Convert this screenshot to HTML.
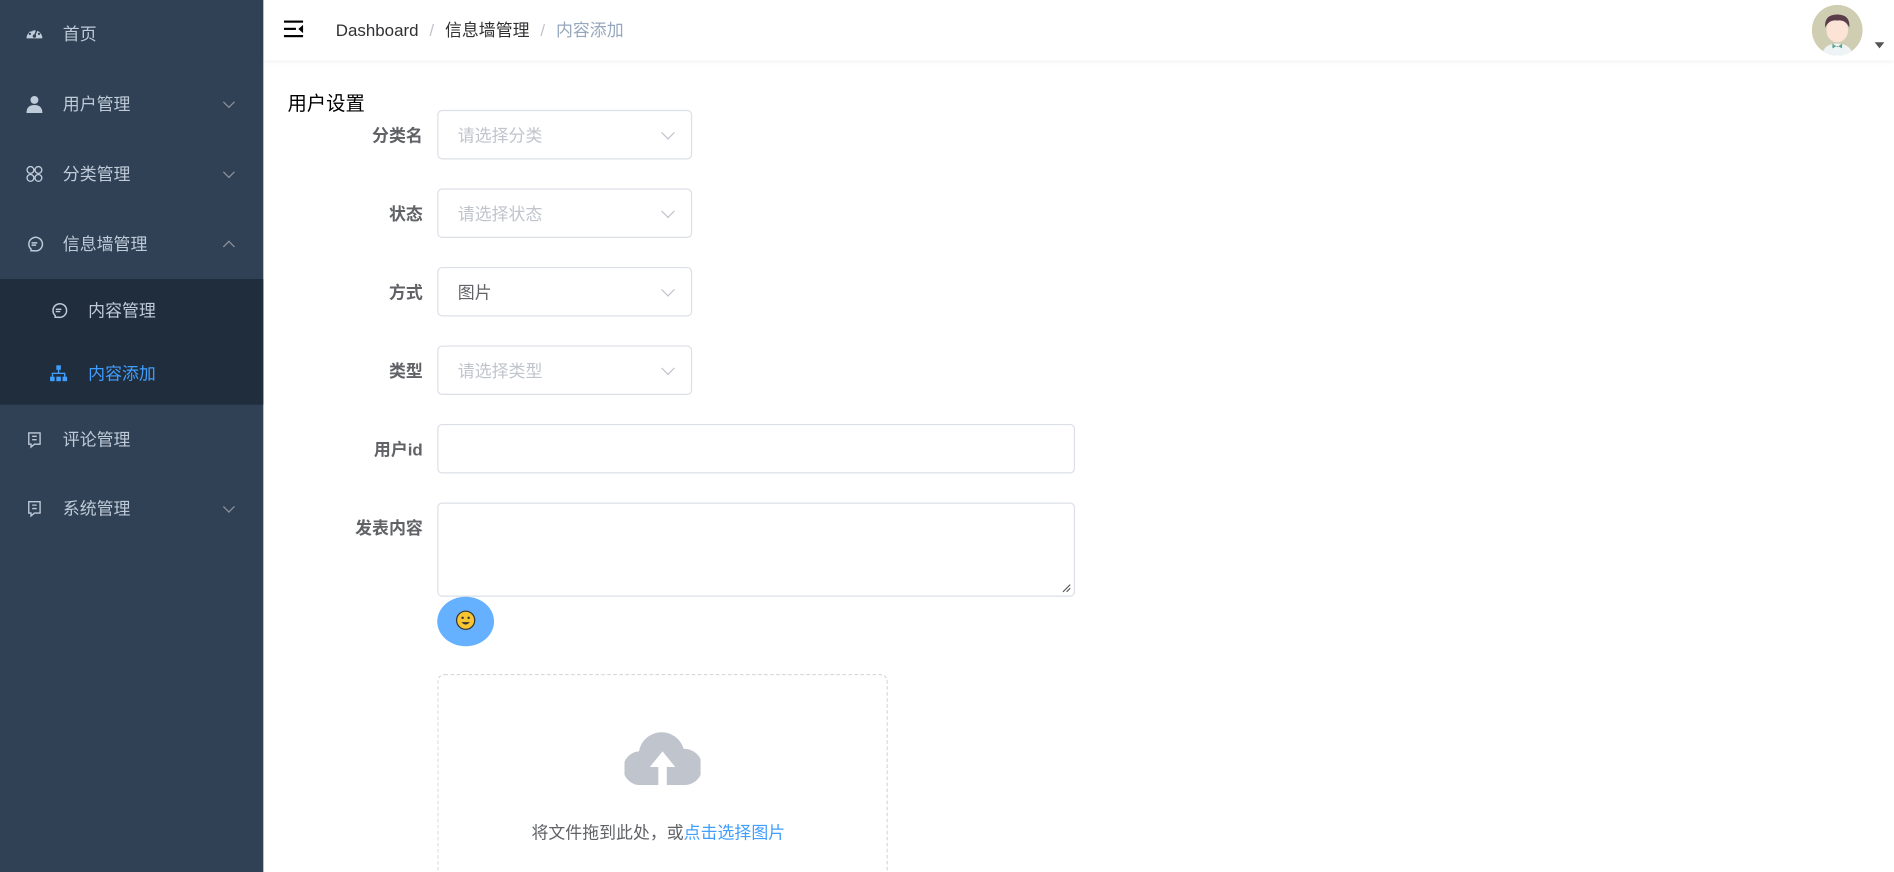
<!DOCTYPE html>
<html><head><meta charset="utf-8"><style>
html,body{margin:0;padding:0;width:1894px;height:872px;overflow:hidden;background:#fff;}
#w{position:absolute;left:0;top:0;width:1568px;height:722px;overflow:hidden;transform:scale(1.20791);transform-origin:0 0;font-family:"Liberation Sans","Noto Sans CJK SC",sans-serif;}
.side{position:absolute;left:0;top:0;width:218px;height:722px;background:#304156;}
.mi{position:absolute;left:0;width:218px;height:56px;color:#bfcbd9;font-size:14px;}
.mi .t{position:absolute;left:52px;top:50%;transform:translateY(-50%);}
.mi .ic{position:absolute;left:21px;top:50%;transform:translateY(-50%);width:15px;height:15px;}
.mi .ar{position:absolute;left:186px;top:50%;width:6px;height:6px;border-right:1px solid #909399;border-bottom:1px solid #909399;transform:translateY(-70%) rotate(45deg);}
.mi .ar.up{transform:translateY(-20%) rotate(-135deg);}
.sub{position:absolute;left:0;top:231px;width:218px;height:104px;background:#1f2d3d;}
.abs{position:absolute;}
.hdr{position:absolute;left:218px;top:0;right:0;height:50px;box-shadow:0 1px 4px rgba(0,21,41,.08);}
.lbl{position:absolute;right:1218px;font-size:14px;font-weight:bold;color:#606266;}
.sel{position:absolute;left:362px;width:209px;height:39px;border:1px solid #dcdfe6;border-radius:4px;font-size:14px;color:#c0c4cc;}
.sel span{position:absolute;left:16px;top:10px;}
.sel i{position:absolute;right:15px;top:14px;width:7px;height:7px;border-right:1px solid #c0c4cc;border-bottom:1px solid #c0c4cc;transform:rotate(45deg);}
</style></head><body><div id="w">
<div class="side">
 <div class="mi" style="top:0"><svg class="ic" viewBox="0 0 16 16"><path d="M1 12 A7 7 0 1 1 15 12 Z" fill="#bfcbd9"/><circle cx="8" cy="10" r="1.5" fill="#304156"/><path d="M8 10 L10 5" stroke="#304156" stroke-width="1.3"/><circle cx="4" cy="8" r="1" fill="#304156"/><circle cx="5.5" cy="5" r="1" fill="#304156"/><circle cx="12" cy="8" r="1" fill="#304156"/></svg><span class="t">首页</span></div>
 <div class="mi" style="top:58px"><svg class="ic" viewBox="0 0 16 16"><circle cx="8" cy="4.5" r="3.5" fill="#bfcbd9"/><path d="M1 16 Q1 9 8 9 Q15 9 15 16Z" fill="#bfcbd9"/></svg><span class="t">用户管理</span><i class="ar"></i></div>
 <div class="mi" style="top:116px"><svg class="ic" viewBox="0 0 16 16" fill="none" stroke="#bfcbd9" stroke-width="1.2"><circle cx="4.5" cy="4.5" r="3"/><circle cx="11.5" cy="4.5" r="3"/><circle cx="4.5" cy="11.5" r="3"/><circle cx="11.5" cy="11.5" r="3"/></svg><span class="t">分类管理</span><i class="ar"></i></div>
 <div class="mi" style="top:174px"><svg class="ic" viewBox="0 0 16 16" fill="none" stroke="#bfcbd9" stroke-width="1.3"><path d="M5 14 L5 12.5 A6 6 0 1 1 8 14 Z"/><path d="M5.5 7h5M5.5 9h4"/></svg><span class="t">信息墙管理</span><i class="ar up"></i></div>
 <div class="sub">
  <div class="mi" style="top:0;height:52px"><svg class="ic" style="left:41px" viewBox="0 0 16 16" fill="none" stroke="#bfcbd9" stroke-width="1.3"><path d="M5 14 L5 12.5 A6 6 0 1 1 8 14 Z"/><path d="M5.5 7h5M5.5 9h4"/></svg><span class="t" style="left:73px">内容管理</span></div>
  <div class="mi" style="top:52px;height:52px;color:#409eff"><svg class="ic" style="left:41px" viewBox="0 0 16 16" fill="#409eff"><rect x="6" y="1" width="4" height="4"/><rect x="7.4" y="5" width="1.2" height="3"/><rect x="2" y="7.5" width="12" height="1.2"/><rect x="2" y="8" width="1.2" height="3"/><rect x="12.8" y="8" width="1.2" height="3"/><rect x="0.5" y="11" width="4" height="4"/><rect x="6" y="11" width="4" height="4"/><rect x="11.5" y="11" width="4" height="4"/></svg><span class="t" style="left:73px">内容添加</span></div>
 </div>
 <div class="mi" style="top:336px"><svg class="ic" viewBox="0 0 16 16" fill="none" stroke="#bfcbd9" stroke-width="1.2"><path d="M3 2h10v10H8l-3 2.5V12H3Z"/><path d="M6 5h4M6 8h4"/></svg><span class="t">评论管理</span></div>
 <div class="mi" style="top:393px"><svg class="ic" viewBox="0 0 16 16" fill="none" stroke="#bfcbd9" stroke-width="1.2"><path d="M3 2h10v10H8l-3 2.5V12H3Z"/><path d="M6 5h4M6 8h4"/></svg><span class="t">系统管理</span><i class="ar"></i></div>
</div>
<div class="hdr">
 <svg class="abs" style="left:17px;top:17px" width="16" height="14" viewBox="0 0 16 14"><rect x="0" y="0" width="16" height="1.8" fill="#000"/><rect x="0" y="6" width="10" height="1.8" fill="#000"/><rect x="0" y="12" width="16" height="1.8" fill="#000"/><path d="M16 3.5 L12 7 L16 10.5Z" fill="#000"/></svg>
 <div class="abs" style="left:60px;top:15px;font-size:14px;color:#303133;white-space:nowrap">Dashboard<span style="color:#c0c4cc;margin:0 9px">/</span>信息墙管理<span style="color:#c0c4cc;margin:0 9px">/</span><span style="color:#97a8be">内容添加</span></div>
 <svg class="abs" style="left:1282px;top:4px" width="42" height="42" viewBox="0 0 42 42"><defs><clipPath id="c"><circle cx="21" cy="21" r="21"/></clipPath></defs><g clip-path="url(#c)"><rect width="42" height="42" fill="#cfcdb2"/><path d="M8 42 Q10 32 21 32 Q32 32 34 42Z" fill="#eef4f5"/><ellipse cx="21" cy="21" rx="9" ry="10" fill="#fbe3d6"/><path d="M11 19 Q10 8 21 8 Q32 8 31 19 Q28 12 21 13 Q14 12 11 19Z" fill="#5a3d4a"/><path d="M17 32 L21 35 L25 32 L25 36 L21 34 L17 36Z" fill="#5aa58a"/></g></svg>
 <div class="abs" style="left:1334px;top:35px;border:4px solid transparent;border-top:5px solid #555;border-bottom:0"></div>
</div>
<div class="abs" style="left:238px;top:72px;font-size:16px;color:#000">用户设置</div>
<div class="lbl" style="top:102px">分类名</div>
<div class="sel" style="top:91px"><span>请选择分类</span><i></i></div>
<div class="lbl" style="top:167px">状态</div>
<div class="sel" style="top:156px"><span>请选择状态</span><i></i></div>
<div class="lbl" style="top:232px">方式</div>
<div class="sel" style="top:221px;color:#606266"><span>图片</span><i></i></div>
<div class="lbl" style="top:297px">类型</div>
<div class="sel" style="top:286px"><span>请选择类型</span><i></i></div>
<div class="lbl" style="top:362px">用户id</div>
<div class="sel" style="top:351px;width:526px"></div>
<div class="lbl" style="top:427px">发表内容</div>
<div class="sel" style="top:416px;width:526px;height:76px"><svg class="abs" style="right:2px;bottom:2px" width="8" height="8"><path d="M7 1 L1 7 M7 4 L4 7" stroke="#555" stroke-width="1"/></svg></div>
<div class="abs" style="left:362px;top:494px;width:47px;height:41px;border-radius:50%;background:#66b1ff"></div>
<svg class="abs" style="left:377px;top:505px" width="17" height="17" viewBox="0 0 17 17"><circle cx="8.5" cy="8.5" r="7.5" fill="#f7c531" stroke="#333" stroke-width="1"/><circle cx="6" cy="6.5" r="1" fill="#333"/><circle cx="11" cy="6.5" r="1" fill="#333"/><path d="M5 10 Q8.5 14 12 10Z" fill="#333"/></svg>
<div class="abs" style="left:362px;top:558px;width:371px;height:180px;border:1px dashed #d9d9d9;border-radius:6px"></div>
<svg class="abs" style="left:517px;top:602px" width="63" height="48" viewBox="0 0 63 48"><path d="M14 48 A14 14 0 0 1 12 20 A19 19 0 0 1 49 18 A15 15 0 0 1 50 48Z" fill="#c0c4cc"/><path d="M31.5 20 L21 33 L28 33 L28 48 L35 48 L35 33 L42 33Z" fill="#fff"/></svg>
<div class="abs" style="left:440px;top:679px;font-size:14px;color:#606266;white-space:nowrap">将文件拖到此处，或<span style="color:#409eff">点击选择图片</span></div>
</div></body></html>
